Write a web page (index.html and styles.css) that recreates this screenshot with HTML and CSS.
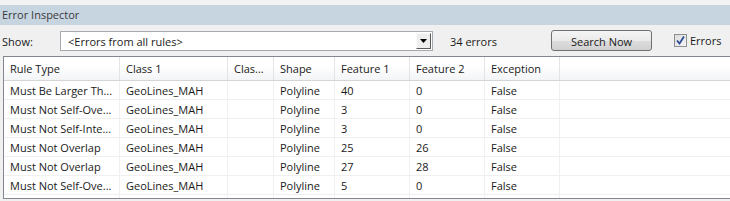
FILE: index.html
```html
<!DOCTYPE html>
<html>
<head>
<meta charset="utf-8">
<link rel="stylesheet" href="styles.css">
</head>
<body>
<div class="top-strip"></div>
<div class="titlebar">Error Inspector</div>
<div class="toolbar">
  <span class="show-label">Show:</span>
  <div class="combo">
    <span class="combo-text">&lt;Errors from all rules&gt;</span>
    <span class="combo-btn"><svg width="7" height="4" viewBox="0 0 7 4"><polygon points="0,0 7,0 3.5,4" fill="#000"/></svg></span>
  </div>
  <span class="count">34 errors</span>
  <button class="search-btn">Search Now</button>
  <label class="chk">
    <span class="box"><svg width="11" height="11" viewBox="0 0 11 11"><path d="M2 5.5 L4.5 8.5 L9 1.5" stroke="#2b4c96" stroke-width="1.8" fill="none"/></svg></span>
    <span>Errors</span>
  </label>
</div>
<div class="grid">
  <div class="row head">
    <div class="c">Rule Type</div><div class="c">Class 1</div><div class="c">Clas...</div><div class="c">Shape</div><div class="c">Feature 1</div><div class="c">Feature 2</div><div class="c">Exception</div><div class="c fill"></div>
  </div>
  <div class="row">
    <div class="c">Must Be Larger Th...</div><div class="c">GeoLines_MAH</div><div class="c"></div><div class="c">Polyline</div><div class="c">40</div><div class="c">0</div><div class="c">False</div><div class="c fill"></div>
  </div>
  <div class="row">
    <div class="c">Must Not Self-Ove...</div><div class="c">GeoLines_MAH</div><div class="c"></div><div class="c">Polyline</div><div class="c">3</div><div class="c">0</div><div class="c">False</div><div class="c fill"></div>
  </div>
  <div class="row">
    <div class="c">Must Not Self-Inte...</div><div class="c">GeoLines_MAH</div><div class="c"></div><div class="c">Polyline</div><div class="c">3</div><div class="c">0</div><div class="c">False</div><div class="c fill"></div>
  </div>
  <div class="row">
    <div class="c">Must Not Overlap</div><div class="c">GeoLines_MAH</div><div class="c"></div><div class="c">Polyline</div><div class="c">25</div><div class="c">26</div><div class="c">False</div><div class="c fill"></div>
  </div>
  <div class="row">
    <div class="c">Must Not Overlap</div><div class="c">GeoLines_MAH</div><div class="c"></div><div class="c">Polyline</div><div class="c">27</div><div class="c">28</div><div class="c">False</div><div class="c fill"></div>
  </div>
  <div class="row">
    <div class="c">Must Not Self-Ove...</div><div class="c">GeoLines_MAH</div><div class="c"></div><div class="c">Polyline</div><div class="c">5</div><div class="c">0</div><div class="c">False</div><div class="c fill"></div>
  </div>
  <div class="row">
    <div class="c"></div><div class="c"></div><div class="c"></div><div class="c"></div><div class="c"></div><div class="c"></div><div class="c"></div><div class="c fill"></div>
  </div>
</div>
</body>
</html>
```

FILE: styles.css
```css
html, body {
  margin: 0;
  padding: 0;
  width: 730px;
  height: 201px;
  overflow: hidden;
  background: #f0f0f0;
  font-family: "Open Sans", "Noto Sans", sans-serif;
  font-size: 11px;
  color: #1a1a1a;
}
.top-strip {
  height: 5px;
  background: #f3f3f3;
}
.titlebar {
  height: 20px;
  line-height: 20px;
  background: #c7d5e1;
  color: #3a3a3a;
  padding-left: 2px;
  font-size: 11px;
}
.toolbar {
  height: 31px;
  display: flex;
  align-items: center;
  box-sizing: border-box;
}
.show-label {
  margin-left: 2px;
  width: 58px;
  padding-top: 2px;
}
.combo {
  width: 373px;
  height: 20px;
  box-sizing: border-box;
  border: 1px solid #a5a9b0;
  background: #fff;
  display: flex;
  align-items: center;
  justify-content: space-between;
}
.combo-text {
  padding-left: 7px;
  padding-top: 1px;
}
.combo-btn {
  width: 15px;
  height: 16px;
  margin-right: 1px;
  box-sizing: border-box;
  background: #eeeeee;
  border-top: 1px solid #f8f8f8;
  border-left: 1px solid #f8f8f8;
  border-right: 1px solid #5a5a5a;
  border-bottom: 1px solid #5a5a5a;
  display: flex;
  align-items: center;
  justify-content: center;
}
.count {
  margin-left: 17px;
  width: 101px;
  padding-top: 2px;
}
.search-btn {
  width: 101px;
  height: 21px;
  box-sizing: border-box;
  border: 1px solid #707070;
  border-radius: 3px;
  background: linear-gradient(#f4f4f4 0%, #ebebeb 50%, #dddddd 51%, #d1d1d1 100%);
  font-family: inherit;
  font-size: 11px;
  color: #1a1a1a;
  padding: 1px 0 0 0;
  margin: 0;
}
.chk {
  margin-left: 22px;
  display: flex;
  align-items: center;
  gap: 3px;
}
.box {
  width: 13px;
  height: 13px;
  box-sizing: border-box;
  border: 1px solid #8e8f8f;
  background: linear-gradient(135deg, #dcdcdc, #f6f6f6);
  display: flex;
  align-items: center;
  justify-content: center;
}
.grid {
  margin-left: 3px;
  width: 740px;
  height: 143px;
  box-sizing: border-box;
  border: 1px solid #828790;
  background: #fff;
  overflow: hidden;
}
.row {
  display: grid;
  grid-template-columns: 116px 108px 46px 61px 75px 75px 75px 1fr;
  height: 19px;
  box-sizing: border-box;
  border-bottom: 1px solid #f0f0f0;
}
.row.head {
  height: 24px;
  background: linear-gradient(#ffffff 0%, #ffffff 40%, #f3f4f6 100%);
  border-bottom: 1px solid #d5d5d5;
}
.c {
  border-right: 1px solid #f0f0f0;
  padding-left: 6px;
  padding-top: 1px;
  white-space: nowrap;
  overflow: hidden;
  line-height: 18px;
}
.head .c {
  border-right: 1px solid #e3e4e6;
  padding-top: 0;
  line-height: 23px;
}
.c.fill {
  border-right: none;
}
```
